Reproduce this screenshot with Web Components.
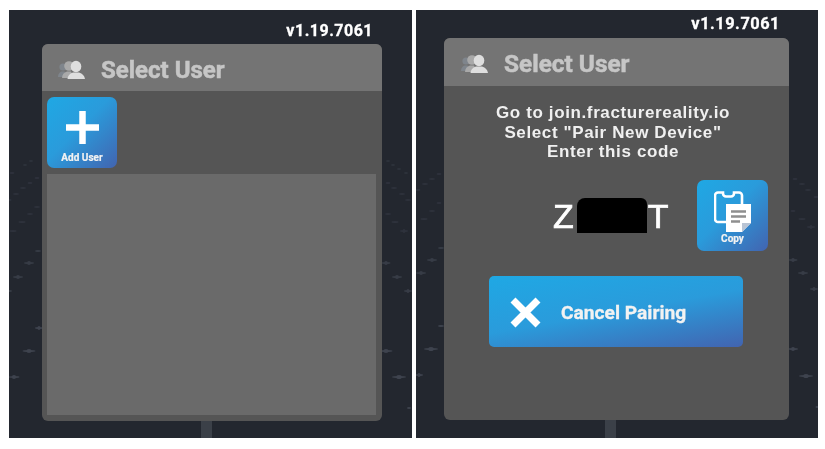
<!DOCTYPE html>
<html>
<head>
<meta charset="utf-8">
<title>Select User</title>
<style>
	html, body { margin: 0; height: 100%; background: #fff; }
	body { font-family: Roboto, sans-serif; }
	main { display: flex; gap: 4px; padding: 10px 0 0 9px; }
</style>
</head>
<body>
<main>
	<fr-screen origin="9" style="--panel-w: 340px; --pad-x: 33px; --pad-top: 34px; --pad-bottom: 17px; --width: 403px; --pole: 192px">
		<fr-panel style="--head: 47px; --head-pad: 16px">
			<div style="display:flex;flex-direction:column;gap:6px;padding:6px 6px 6px 5px;flex:1">
				<fr-tile label="Add User" icon="plus"></fr-tile>
				<fr-user-list></fr-user-list>
			</div>
		</fr-panel>
	</fr-screen>
	<fr-screen origin="416" style="--panel-w: 345px; --pad-x: 28px; --pad-top: 28px; --pad-bottom: 18px; --width: 402px; --pole: 189px; --version-right: 38px; --version-top: 3px; --version-size: 16.4px">
		<fr-panel style="--head: 48px; --head-pad: 17px; --title-size: 24.4px">
			<fr-pairing></fr-pairing>
		</fr-panel>
	</fr-screen>
</main>

<template id="screen-template">
	<style>
		:host {
			display: block;
			position: relative;
			box-sizing: border-box;
			width: var(--width);
			height: 428px;
			overflow: hidden;
			background: #23272f;
			color: #fff;
			padding: var(--pad-top) 0 0 var(--pad-x);
			filter: blur(.3px);
		}
		.version {
			position: absolute;
			top: var(--version-top, 10px);
			right: var(--version-right, 39px);
			font: 700 var(--version-size, 16px)/22px Roboto, sans-serif;
			letter-spacing: .5px;
			-webkit-text-stroke: .3px #fff;
		}
		.floor { position: absolute; left: 0; top: 0; filter: blur(.5px); }
		.pole { position: absolute; bottom: 0; left: var(--pole); width: 11px; height: 18px; background: #3b4048; }
		.content { position: relative; width: var(--panel-w); height: calc(100% - var(--pad-bottom)); display: flex; }
	</style>
	<svg class="floor" width="403" height="428"></svg>
	<div class="pole"></div>
	<div class="version">v1.19.7061</div>
	<div class="content"><slot></slot></div>
</template>

<template id="panel-template">
	<style>
		:host {
			display: flex;
			flex-direction: column;
			flex: 1;
			background: #555;
			border-radius: 6px;
			overflow: hidden;
		}
		header {
			display: flex;
			align-items: center;
			gap: 16px;
			box-sizing: border-box;
			height: var(--head, 47px);
			flex: none;
			padding: 4px 0 0 var(--head-pad, 16px);
			background: #747474;
		}
		h1 {
			margin: 0;
			font: 700 var(--title-size, 24px)/1 Roboto, sans-serif;
			color: #c6c6c6;
			-webkit-text-stroke: .5px #c6c6c6;
		}
		svg { display: block; }
		.body { flex: 1; display: flex; flex-direction: column; min-height: 0; }
	</style>
	<header>
		<svg width="27" height="20" viewBox="0 0 27 20">
			<circle cx="5" cy="7" r="3.600" fill="#7f858c"/>
			<path d="M0 17c0-3 1.500-4.500 3.500-5.500h3l3 5.500z" fill="#7f858c"/>
			<circle cx="11" cy="6" r="4.800" fill="#a9a9a9"/>
			<path d="M4 18c0-3.500 2-5.500 5-6.500h4l3 6.500z" fill="#a9a9a9"/>
			<ellipse cx="18" cy="6.500" rx="5.300" ry="5.800" fill="#dedede"/>
			<path d="M9.500 19c.3-3 2-5.500 5.500-6.500h6c3.500 1 5.500 3.500 6 6.500z" fill="#dedede"/>
		</svg>
		<h1>Select User</h1>
	</header>
	<div class="body"><slot></slot></div>
</template>

<template id="tile-template">
	<style>
		:host {
			display: flex;
			flex-direction: column;
			align-items: center;
			flex: none;
			box-sizing: border-box;
			width: var(--tile-w, 70px);
			height: 71px;
			padding-top: var(--icon-top, 14px);
			border-radius: 7px;
			background: linear-gradient(135deg, #1fa8e4 0%, #2a9bdb 45%, #4264b0 100%);
			color: #fff;
		}
		.label {
			margin-top: var(--label-gap, 8px);
			font: 700 10px/12px Roboto, sans-serif;
			color: #f2f2f2;
			-webkit-text-stroke: .2px #f2f2f2;
		}
		svg { display: block; }
	</style>
	<div class="icon"></div>
	<div class="label"></div>
</template>

<template id="pairing-template">
	<style>
		:host { display: flex; flex-direction: column; align-items: flex-start; flex: 1; }
		p {
			align-self: stretch;
			margin: 17px 0 0;
			padding-right: 7px;
			text-align: center;
			font: 700 17px/19.700px "Liberation Sans", sans-serif;
			letter-spacing: .62px;
			color: #f0f0f0;
		}
		.code-row {
			display: flex;
			align-items: center;
			margin-top: 18px;
			padding-left: 109px;
		}
		.code {
			display: flex;
			align-items: center;
			width: 144px;
			font: 400 34px/1 "Liberation Sans", sans-serif;
			color: #fff;
			-webkit-text-stroke: .7px #fff;
		}
		.redact {
			flex: none;
			width: 70px;
			height: 35px;
			margin: 0 1px 0 3px;
			background: #000;
			border-radius: 8px 6px 0 0;
		}
		.cancel {
			display: flex;
			align-items: center;
			box-sizing: border-box;
			width: 254px;
			height: 71px;
			margin: 25px 0 0 45px;
			padding: 2px 0 0 20px;
			gap: 19px;
			border-radius: 5px;
			background: linear-gradient(170deg, #1fa8e4 0%, #2a9bdb 50%, #4264b0 100%);
			font: 700 19.200px/1 Roboto, sans-serif;
			color: #f2f2f2;
			-webkit-text-stroke: .3px #f2f2f2;
		}
		svg { display: block; }
	</style>
	<p>Go to join.fracturereality.io<br>Select "Pair New Device"<br>Enter this code</p>
	<div class="code-row">
		<div class="code"><span>Z</span><div class="redact"></div><span>T</span></div>
		<fr-tile label="Copy" icon="copy" style="--tile-w: 71px; --icon-top: 11px; --label-gap: 1px"></fr-tile>
	</div>
	<div class="cancel">
		<svg width="33" height="33" viewBox="0 0 33 33"><path d="M4 4L29 29M29 4L4 29" stroke="#fff" stroke-width="7" fill="none"/></svg>
		<span>Cancel Pairing</span>
	</div>
</template>

<script>
'use strict';

// x, y (page coordinates), width of the specks on the ground plane
const floorSpecks = [
	[29,351,13],[14,377,11],[39,328,8],[29,263,10],[18,277,10],[10,291,4],[38,251,6],[13,231,7],[22,222,7],[30,214,6],
	[37,207,6],[10,200,3],[16,194,6],[23,188,6],[30,183,5],[37,178,5],[12,173,5],[25,165,4],[31,161,4],
	[386,351,13],[399,377,14],[409,408,4],[408,291,8],[397,277,10],[386,263,9],[404,231,8],[395,222,7],[388,214,6],
	[408,200,6],[402,194,6],[394,188,6],[388,183,5],[406,173,4],[399,169,4],[393,165,4],[388,161,4],
	[419,375,8],[431,349,14],[441,326,6],[421,273,10],[432,260,10],[441,248,6],[424,219,7],[432,211,6],[439,203,5],
	[418,190,5],[425,184,6],[432,179,6],[439,174,5],
	[806,376,14],[793,349,10],[817,407,3],[814,289,8],[803,273,10],[793,260,9],[811,227,8],[802,219,7],[793,211,5],
	[816,197,5],[808,190,6],[802,184,6],[795,179,5]
];

function makeRoot(el, templateId) {
	const shadow = el.attachShadow({mode: 'open'});
	shadow.appendChild(document.getElementById(templateId).content.cloneNode(true));
	return shadow;
}

class FrScreen extends HTMLElement {
	constructor() {
		super();
		makeRoot(this, 'screen-template');
	}

	connectedCallback() {
		const origin = Number(this.getAttribute('origin'));
		let marks = '';
		for (const [x, y, w] of floorSpecks) {
			const cx = x - origin;
			if (cx < -8 || cx > 410) continue;
			const cy = y - 10;
			const fill = y > 300 ? '#3e434e' : y > 240 ? '#373c46' : '#2e323c';
			marks += `<ellipse cx="${cx}" cy="${cy}" rx="${w / 2}" ry="1" fill="${fill}"/>`;
			if (w >= 8) marks += `<ellipse cx="${cx}" cy="${cy}" rx="${w / 5}" ry="2" fill="${fill}"/>`;
		}
		this.shadowRoot.querySelector('.floor').innerHTML = marks;
	}
}
customElements.define('fr-screen', FrScreen);

class FrPanel extends HTMLElement {
	constructor() {
		super();
		makeRoot(this, 'panel-template');
	}
}
customElements.define('fr-panel', FrPanel);

const tileIcons = {
	plus: `<svg width="33" height="33" viewBox="0 0 33 33"><path d="M16.500 0v33M0 16.500h33" stroke="#fff" stroke-width="6.500" fill="none"/></svg>`,
	copy: `<svg width="37" height="41" viewBox="0 0 37 41">
		<path d="M4 1.500h5v1a3 3 0 0 0 3 3h5a3 3 0 0 0 3-3v-1h5a3 3 0 0 1 3 3V28a3 3 0 0 1-3 3H4a3 3 0 0 1-3-3V4.500a3 3 0 0 1 3-3z" fill="none" stroke="#fff" stroke-width="2.600"/>
		<path d="M12 13h25v19l-9 9H12z" fill="#fff"/>
		<path d="M28 41v-9h9z" fill="#b9c4d4"/>
		<path d="M17 20.500h15M17 25.500h15M17 30.500h9" stroke="#8f8f8f" stroke-width="2.300" fill="none"/>
	</svg>`
};

class FrTile extends HTMLElement {
	constructor() {
		super();
		makeRoot(this, 'tile-template');
	}

	connectedCallback() {
		const shadow = this.shadowRoot;
		shadow.querySelector('.icon').innerHTML = tileIcons[this.getAttribute('icon')];
		shadow.querySelector('.label').textContent = this.getAttribute('label');
	}
}
customElements.define('fr-tile', FrTile);

class FrUserList extends HTMLElement {
	constructor() {
		super();
		const shadow = this.attachShadow({mode: 'open'});
		shadow.innerHTML = `<style>:host { display: block; flex: 1; background: #6a6a6a; }</style>`;
	}
}
customElements.define('fr-user-list', FrUserList);

class FrPairing extends HTMLElement {
	constructor() {
		super();
		makeRoot(this, 'pairing-template');
	}
}
customElements.define('fr-pairing', FrPairing);
</script>
</body>
</html>
